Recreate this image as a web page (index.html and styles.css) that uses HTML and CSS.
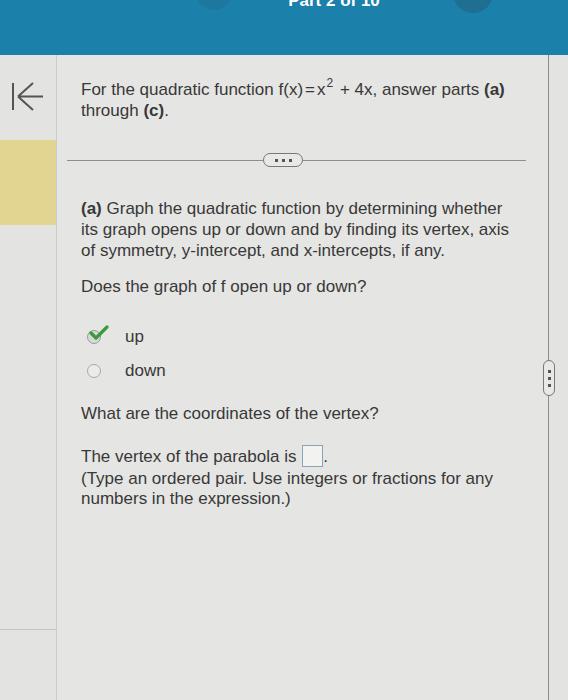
FILE: index.html
```html
<!DOCTYPE html>
<html>
<head>
<meta charset="utf-8">
<link rel="stylesheet" href="styles.css">
</head>
<body>
<div class="page">
  <header class="topbar">
    <span class="hdr-btn hdr-btn-left"></span>
    <span class="title">Part 2 of 10</span>
    <span class="hdr-btn hdr-btn-right"></span>
  </header>
  <div class="main">
    <aside class="sidebar">
      <svg class="back" width="32" height="30" viewBox="0 0 32 30">
        <path d="M2 1 V28 M7 14.5 H32 M7 14.5 L22 1 M7 14.5 L22 28" fill="none" stroke="#555" stroke-width="2"/>
      </svg>
      <div class="flag"></div>
      <div class="side-spacer"></div>
      <div class="side-line"></div>
    </aside>
    <section class="panel">
      <p class="intro">For the quadratic function f(x)<span class="eq">=</span>x<sup>2</sup> + 4x, answer parts <b>(a)</b><br>through <b>(c)</b>.</p>
      <div class="divider">
        <span class="rule"></span>
        <span class="more"><i></i><i></i><i></i></span>
        <span class="rule"></span>
      </div>
      <p class="parta"><b>(a)</b> Graph the quadratic function by determining whether<br>its graph opens up or down and by finding its vertex, axis<br>of symmetry, y-intercept, and x-intercepts, if any.</p>
      <p class="ask">Does the graph of f open up or down?</p>
      <div class="choices">
        <div class="choice">
          <span class="radio checked">
            <svg class="tick" width="20" height="16" viewBox="0 0 20 16"><path d="M2 8 L7 13 L18 2" fill="none" stroke="#3b9b38" stroke-width="3.2" stroke-linecap="round" stroke-linejoin="round"/></svg>
          </span>
          <span class="label">up</span>
        </div>
        <div class="choice">
          <span class="radio"></span>
          <span class="label">down</span>
        </div>
      </div>
      <p class="ask2">What are the coordinates of the vertex?</p>
      <p class="answer">The vertex of the parabola is <span class="box"></span>.</p>
      <p class="hint">(Type an ordered pair. Use integers or fractions for any<br>numbers in the expression.)</p>
      <div class="scroll"><i></i><i></i><i></i></div>
    </section>
    <div class="gutter"></div>
  </div>
</div>
</body>
</html>
```
FILE: styles.css
```css
html, body {
  margin: 0;
  padding: 0;
}
body {
  width: 568px;
  height: 700px;
  overflow: hidden;
  background: #e3e3e1;
  font-family: "Liberation Sans", Arial, sans-serif;
  color: #383838;
}
.page {
  display: flex;
  flex-direction: column;
  height: 700px;
}
.topbar {
  position: relative;
  height: 55px;
  flex: none;
  background: #1b80aa;
  display: flex;
  justify-content: center;
  padding-left: 100px;
  overflow: hidden;
}
.title {
  color: #fff;
  font-weight: bold;
  font-size: 17px;
  line-height: 17px;
  margin-top: -8px;
}
.hdr-btn {
  position: absolute;
  border-radius: 50%;
  background: #1f6f92;
}
.hdr-btn-right {
  left: 453px;
  top: -27px;
  width: 40px;
  height: 40px;
}
.hdr-btn-left {
  left: 196px;
  top: -26px;
  width: 36px;
  height: 36px;
  background: #1d789f;
}
.main {
  flex: 1;
  display: flex;
}
.sidebar {
  width: 56px;
  flex: none;
  display: flex;
  flex-direction: column;
}
.back {
  display: block;
  margin: 27px 0 0 11px;
}
.flag {
  margin-top: 28px;
  height: 85px;
  background: #e2d591;
}
.side-spacer {
  flex: none;
  height: 404px;
}
.side-line {
  height: 1px;
  width: 60px;
  background: #c6c6c4;
}
.panel {
  position: relative;
  width: 493px;
  flex: none;
  border-left: 1px solid #cdcdcb;
  border-right: 1px solid #8c8c8c;
  background: #e5e5e3;
  padding: 24px 22px 0 24px;
  box-sizing: border-box;
  font-size: 17px;
  line-height: 21px;
}
.panel p {
  margin: 0;
  white-space: nowrap;
}
.eq {
  margin: 0 2px;
}
sup {
  font-size: 12px;
  line-height: 0;
  vertical-align: 8px;
  margin-left: 1px;
  margin-right: 2px;
}
.divider {
  display: flex;
  align-items: center;
  margin: 32px 0 0 -14px;
  height: 14px;
}
.rule {
  flex: 1;
  height: 1px;
  background: #8e8e8e;
}
.rule:first-child {
  flex: none;
  width: 196px;
}
.more {
  width: 38px;
  height: 12px;
  border: 1px solid #777;
  border-radius: 7px;
  display: flex;
  justify-content: center;
  align-items: center;
  gap: 4px;
  background: #e8e8e6;
}
.more i, .scroll i {
  display: block;
  width: 3px;
  height: 3px;
  background: #555;
}
.parta {
  margin-top: 31px !important;
}
.ask {
  margin-top: 15px !important;
}
.choices {
  margin-top: 29px;
  display: flex;
  flex-direction: column;
  gap: 13px;
}
.choice {
  display: flex;
  align-items: center;
  height: 21px;
}
.radio {
  position: relative;
  width: 12px;
  height: 12px;
  border: 1.5px solid #a8a8a8;
  border-radius: 50%;
  margin-left: 6px;
  background: #ebebea;
}
.radio.checked {
  border-color: #9a9a9a;
  background: #d8d8d6;
}
.tick {
  position: absolute;
  left: 1px;
  top: -6px;
}
.label {
  margin-left: 24px;
}
.ask2 {
  margin-top: 22px !important;
}
.answer {
  margin-top: 21px !important;
  line-height: 24px !important;
}
.box {
  display: inline-block;
  width: 19px;
  height: 20px;
  border: 1px solid #8ea3b8;
  background: #f2f2f0;
  vertical-align: middle;
  margin-left: 1px;
  margin-top: -3px;
}
.hint {
  line-height: 20px !important;
}
.scroll {
  position: absolute;
  right: -7px;
  top: 305px;
  width: 10px;
  height: 34px;
  border: 1px solid #777;
  border-radius: 6px;
  background: #e8e8e6;
  display: flex;
  flex-direction: column;
  align-items: center;
  justify-content: center;
  gap: 4px;
}
.gutter {
  flex: 1;
}
```
